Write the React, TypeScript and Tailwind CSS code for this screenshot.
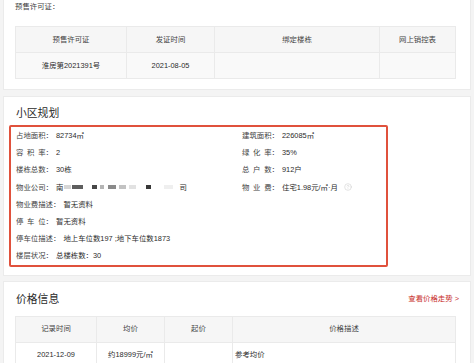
import { CircleHelp } from 'lucide-react';

const font = "font-['Liberation_Sans','Noto_Sans_CJK_SC',sans-serif]";

function Label({ text, spaced }: { text: string; spaced?: boolean }) {
  if (spaced) {
    return (
      <span className="inline-flex items-center text-[#444]">
        <span className="flex w-[4em] justify-between">
          {text.split('').map((c, i) => (
            <span key={i}>{c}</span>
          ))}
        </span>
        ：
      </span>
    );
  }
  return <span className="text-[#444]">{text}：</span>;
}

function Item({ label, spaced, children }: { label: string; spaced?: boolean; children: React.ReactNode }) {
  return (
    <div className="flex h-[17.2px] items-center whitespace-nowrap">
      <Label text={label} spaced={spaced} />
      <span className="ml-[3px] flex items-center text-[#2b2b2b]">{children}</span>
    </div>
  );
}

function Blurred() {
  const blocks = [
    { w: 7, c: '#d6d6d6', m: 1 },
    { w: 11, c: '#5e5e5e', m: 1 },
    { w: 5, c: '#474747', m: 9 },
    { w: 4, c: '#b5b5b5', m: 3 },
    { w: 8, c: '#8a8a8a', m: 4 },
    { w: 7, c: '#c2c2c2', m: 3 },
    { w: 7, c: '#e2e2e2', m: 3 },
    { w: 5, c: '#383838', m: 10 },
    { w: 9, c: '#efefef', m: 13 },
  ];
  return (
    <span className="flex items-center">
      南
      {blocks.map((b, i) => (
        <span
          key={i}
          className="inline-block h-[4px]"
          style={{ width: b.w, background: b.c, marginLeft: b.m }}
        />
      ))}
      <span className="ml-[6px]">司</span>
    </span>
  );
}

export default function App() {
  return (
    <div className={`h-[363px] overflow-hidden bg-[#f4f4f4] px-[3px] text-[7.4px] text-[#333] ${font}`}>
      {/* 预售许可证 */}
      <div className="border border-t-0 border-[#ebebeb] bg-white px-[11px] pb-[10px] pt-[2px]">
        <div className="h-[10px] leading-[10px] text-[#444]">预售许可证：</div>
        <div className="mt-[14px] w-[441px] border-l border-t border-[#eaeaea] bg-[#f6f6f6]">
          <div className="grid grid-cols-[111px_88px_165px_1fr] text-[#444]">
            {['预售许可证', '发证时间', '绑定楼栋', '网上销控表'].map((h) => (
              <div key={h} className="flex h-[26px] items-center justify-center border-b border-r border-[#eaeaea]">
                {h}
              </div>
            ))}
          </div>
          <div className="grid grid-cols-[111px_88px_165px_1fr] bg-[#f9f9f9] text-[#2b2b2b]">
            {['淮房第2021391号', '2021-08-05', '', ''].map((h, i) => (
              <div key={i} className="flex h-[26px] items-center justify-center border-b border-r border-[#eaeaea]">
                {h}
              </div>
            ))}
          </div>
        </div>
      </div>

      {/* 小区规划 */}
      <div className="mt-[6px] border border-[#ebebeb] bg-white pb-[8px] pl-[5px] pt-[8px]">
        <div className="ml-[7px] h-[16px] text-[10.8px] leading-[16px] text-[#2b2b2b]">小区规划</div>
        <div className="mt-[4px] w-[379px] rounded-[2px] border-2 border-[#e0513c] px-[5px]">
          <div className="grid grid-cols-[226px_1fr]">
            <Item label="占地面积">82734㎡</Item>
            <Item label="建筑面积">226085㎡</Item>
            <Item label="容积率" spaced>2</Item>
            <Item label="绿化率" spaced>35%</Item>
            <Item label="楼栋总数">30栋</Item>
            <Item label="总户数" spaced>912户</Item>
            <Item label="物业公司">
              <Blurred />
            </Item>
            <Item label="物业费" spaced>
              住宅1.98元/㎡·月
              <CircleHelp className="ml-[6px] h-[8px] w-[8px] text-[#c8c8c8]" strokeWidth={1.5} />
            </Item>
          </div>
          <Item label="物业费描述">暂无资料</Item>
          <Item label="停车位" spaced>暂无资料</Item>
          <Item label="停车位描述">地上车位数197 ;地下车位数1873</Item>
          <Item label="楼层状况">总楼栋数：30</Item>
        </div>
      </div>

      {/* 价格信息 */}
      <div className="mt-[5px] h-[120px] border border-[#ebebeb] bg-white px-[11px] pt-[9px]">
        <div className="flex h-[16px] items-center justify-between">
          <span className="ml-[1px] text-[10.8px] leading-[16px] text-[#2b2b2b]">价格信息</span>
          <span className="text-[#c9302c]">查看价格走势 &gt;</span>
        </div>
        <div className="mt-[9px] w-[441px] border-l border-t border-[#eaeaea]">
          <div className="grid grid-cols-[81px_68px_68px_1fr] bg-[#f6f6f6] text-[#444]">
            {['记录时间', '均价', '起价', '价格描述'].map((h) => (
              <div key={h} className="flex h-[26px] items-center justify-center border-b border-r border-[#eaeaea]">
                {h}
              </div>
            ))}
          </div>
          <div className="grid grid-cols-[81px_68px_68px_1fr] text-[#2b2b2b]">
            <div className="flex h-[26px] items-center justify-center border-b border-r border-[#eaeaea]">2021-12-09</div>
            <div className="flex h-[26px] items-center justify-center border-b border-r border-[#eaeaea]">约18999元/㎡</div>
            <div className="flex h-[26px] items-center justify-center border-b border-r border-[#eaeaea]"></div>
            <div className="flex h-[26px] items-center border-b border-r border-[#eaeaea] pl-[2px]">参考均价</div>
          </div>
        </div>
      </div>
    </div>
  );
}
